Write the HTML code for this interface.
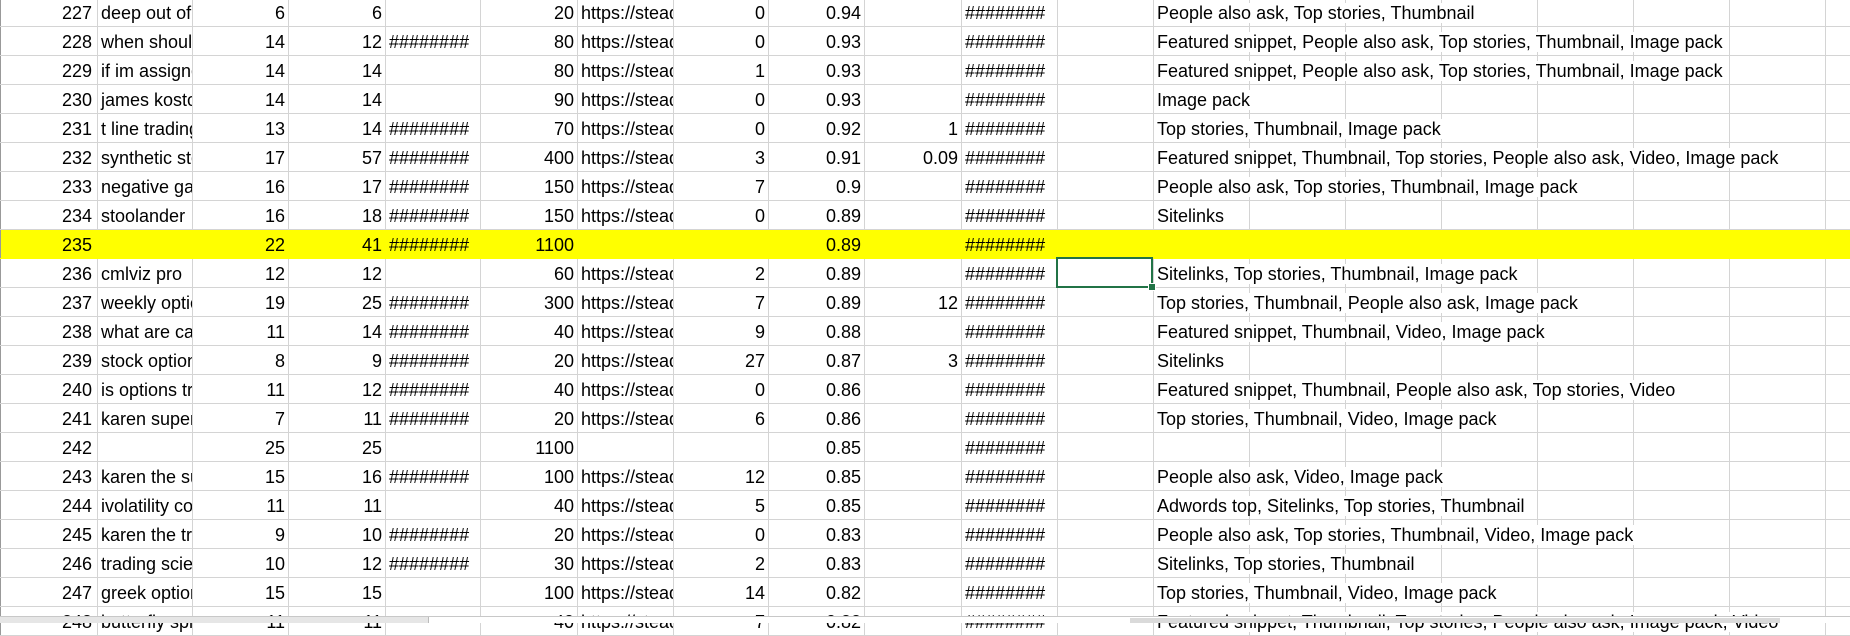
<!DOCTYPE html>
<html><head><meta charset="utf-8"><style>
html,body{margin:0;padding:0;width:1850px;height:622px;overflow:hidden;background:#fff;font-family:"Liberation Sans",sans-serif;}
table{position:absolute;left:0;top:-3px;width:1921px;border-collapse:collapse;table-layout:fixed;font-size:18px;color:#000;}
td{height:29px;border:1px solid #d4d4d4;padding:0 3px 3px 3px;white-space:nowrap;overflow:hidden;vertical-align:bottom;line-height:20px;box-sizing:border-box;}
td.r{text-align:right;}
td.h{text-align:right;padding-right:5px;border-left:1px solid #999;}
td.m{overflow:visible;position:relative;}
td.m span{position:relative;z-index:2;background:#fff;padding-right:2px;}
tr.y td{background:#ffff00;border-color:#ffff00;}
tr.y td.h{border-left-color:#999;}
tr{height:29px;}
.sel{position:absolute;left:1056px;top:257px;width:97px;height:31px;border:2px solid #217346;box-sizing:border-box;z-index:3;}
.sel i{position:absolute;right:-5px;bottom:-5px;width:6px;height:6px;background:#217346;border:1px solid #fff;}
.sb{position:absolute;left:0;top:616px;width:1850px;height:6px;background:#fff;border-top:1px solid #c8c8c8;z-index:5;}
.sb .a{position:absolute;left:0;top:0;width:428px;height:6px;background:#e6e6e6;border-right:1px solid #bbb;}
.sb .t{position:absolute;left:1130px;top:1px;width:650px;height:5px;background:#dadada;}
</style></head><body>
<table>
<colgroup><col style="width:97px"><col style="width:95px"><col style="width:96px"><col style="width:97px"><col style="width:95px"><col style="width:97px"><col style="width:96px"><col style="width:95px"><col style="width:96px"><col style="width:97px"><col style="width:96px"><col style="width:96px"><col style="width:96px"><col style="width:96px"><col style="width:96px"><col style="width:96px"><col style="width:96px"><col style="width:96px"><col style="width:96px"><col style="width:96px"></colgroup>
<tr><td class="h">227</td><td>deep out of</td><td class="r">6</td><td class="r">6</td><td></td><td class="r">20</td><td>https://steadyoptions</td><td class="r">0</td><td class="r">0.94</td><td></td><td>########</td><td></td><td class="m"><span>People also ask, Top stories, Thumbnail</span></td><td></td><td></td><td></td><td></td><td></td><td></td><td></td></tr>
<tr><td class="h">228</td><td>when should</td><td class="r">14</td><td class="r">12</td><td>########</td><td class="r">80</td><td>https://steadyoptions</td><td class="r">0</td><td class="r">0.93</td><td></td><td>########</td><td></td><td class="m"><span>Featured snippet, People also ask, Top stories, Thumbnail, Image pack</span></td><td></td><td></td><td></td><td></td><td></td><td></td><td></td></tr>
<tr><td class="h">229</td><td>if im assigned</td><td class="r">14</td><td class="r">14</td><td></td><td class="r">80</td><td>https://steadyoptions</td><td class="r">1</td><td class="r">0.93</td><td></td><td>########</td><td></td><td class="m"><span>Featured snippet, People also ask, Top stories, Thumbnail, Image pack</span></td><td></td><td></td><td></td><td></td><td></td><td></td><td></td></tr>
<tr><td class="h">230</td><td>james kostohryz</td><td class="r">14</td><td class="r">14</td><td></td><td class="r">90</td><td>https://steadyoptions</td><td class="r">0</td><td class="r">0.93</td><td></td><td>########</td><td></td><td class="m"><span>Image pack</span></td><td></td><td></td><td></td><td></td><td></td><td></td><td></td></tr>
<tr><td class="h">231</td><td>t line trading</td><td class="r">13</td><td class="r">14</td><td>########</td><td class="r">70</td><td>https://steadyoptions</td><td class="r">0</td><td class="r">0.92</td><td class="r">1</td><td>########</td><td></td><td class="m"><span>Top stories, Thumbnail, Image pack</span></td><td></td><td></td><td></td><td></td><td></td><td></td><td></td></tr>
<tr><td class="h">232</td><td>synthetic stock</td><td class="r">17</td><td class="r">57</td><td>########</td><td class="r">400</td><td>https://steadyoptions</td><td class="r">3</td><td class="r">0.91</td><td class="r">0.09</td><td>########</td><td></td><td class="m"><span>Featured snippet, Thumbnail, Top stories, People also ask, Video, Image pack</span></td><td></td><td></td><td></td><td></td><td></td><td></td><td></td></tr>
<tr><td class="h">233</td><td>negative gamma</td><td class="r">16</td><td class="r">17</td><td>########</td><td class="r">150</td><td>https://steadyoptions</td><td class="r">7</td><td class="r">0.9</td><td></td><td>########</td><td></td><td class="m"><span>People also ask, Top stories, Thumbnail, Image pack</span></td><td></td><td></td><td></td><td></td><td></td><td></td><td></td></tr>
<tr><td class="h">234</td><td>stoolander</td><td class="r">16</td><td class="r">18</td><td>########</td><td class="r">150</td><td>https://steadyoptions</td><td class="r">0</td><td class="r">0.89</td><td></td><td>########</td><td></td><td class="m"><span>Sitelinks</span></td><td></td><td></td><td></td><td></td><td></td><td></td><td></td></tr>
<tr class="y"><td class="h">235</td><td></td><td class="r">22</td><td class="r">41</td><td>########</td><td class="r">1100</td><td></td><td></td><td class="r">0.89</td><td></td><td>########</td><td></td><td></td><td></td><td></td><td></td><td></td><td></td><td></td><td></td></tr>
<tr><td class="h">236</td><td>cmlviz pro</td><td class="r">12</td><td class="r">12</td><td></td><td class="r">60</td><td>https://steadyoptions</td><td class="r">2</td><td class="r">0.89</td><td></td><td>########</td><td></td><td class="m"><span>Sitelinks, Top stories, Thumbnail, Image pack</span></td><td></td><td></td><td></td><td></td><td></td><td></td><td></td></tr>
<tr><td class="h">237</td><td>weekly options</td><td class="r">19</td><td class="r">25</td><td>########</td><td class="r">300</td><td>https://steadyoptions</td><td class="r">7</td><td class="r">0.89</td><td class="r">12</td><td>########</td><td></td><td class="m"><span>Top stories, Thumbnail, People also ask, Image pack</span></td><td></td><td></td><td></td><td></td><td></td><td></td><td></td></tr>
<tr><td class="h">238</td><td>what are calls</td><td class="r">11</td><td class="r">14</td><td>########</td><td class="r">40</td><td>https://steadyoptions</td><td class="r">9</td><td class="r">0.88</td><td></td><td>########</td><td></td><td class="m"><span>Featured snippet, Thumbnail, Video, Image pack</span></td><td></td><td></td><td></td><td></td><td></td><td></td><td></td></tr>
<tr><td class="h">239</td><td>stock options</td><td class="r">8</td><td class="r">9</td><td>########</td><td class="r">20</td><td>https://steadyoptions</td><td class="r">27</td><td class="r">0.87</td><td class="r">3</td><td>########</td><td></td><td class="m"><span>Sitelinks</span></td><td></td><td></td><td></td><td></td><td></td><td></td><td></td></tr>
<tr><td class="h">240</td><td>is options trading</td><td class="r">11</td><td class="r">12</td><td>########</td><td class="r">40</td><td>https://steadyoptions</td><td class="r">0</td><td class="r">0.86</td><td></td><td>########</td><td></td><td class="m"><span>Featured snippet, Thumbnail, People also ask, Top stories, Video</span></td><td></td><td></td><td></td><td></td><td></td><td></td><td></td></tr>
<tr><td class="h">241</td><td>karen supertrader</td><td class="r">7</td><td class="r">11</td><td>########</td><td class="r">20</td><td>https://steadyoptions</td><td class="r">6</td><td class="r">0.86</td><td></td><td>########</td><td></td><td class="m"><span>Top stories, Thumbnail, Video, Image pack</span></td><td></td><td></td><td></td><td></td><td></td><td></td><td></td></tr>
<tr><td class="h">242</td><td></td><td class="r">25</td><td class="r">25</td><td></td><td class="r">1100</td><td></td><td></td><td class="r">0.85</td><td></td><td>########</td><td></td><td></td><td></td><td></td><td></td><td></td><td></td><td></td><td></td></tr>
<tr><td class="h">243</td><td>karen the supertrader</td><td class="r">15</td><td class="r">16</td><td>########</td><td class="r">100</td><td>https://steadyoptions</td><td class="r">12</td><td class="r">0.85</td><td></td><td>########</td><td></td><td class="m"><span>People also ask, Video, Image pack</span></td><td></td><td></td><td></td><td></td><td></td><td></td><td></td></tr>
<tr><td class="h">244</td><td>ivolatility com</td><td class="r">11</td><td class="r">11</td><td></td><td class="r">40</td><td>https://steadyoptions</td><td class="r">5</td><td class="r">0.85</td><td></td><td>########</td><td></td><td class="m"><span>Adwords top, Sitelinks, Top stories, Thumbnail</span></td><td></td><td></td><td></td><td></td><td></td><td></td><td></td></tr>
<tr><td class="h">245</td><td>karen the trader</td><td class="r">9</td><td class="r">10</td><td>########</td><td class="r">20</td><td>https://steadyoptions</td><td class="r">0</td><td class="r">0.83</td><td></td><td>########</td><td></td><td class="m"><span>People also ask, Top stories, Thumbnail, Video, Image pack</span></td><td></td><td></td><td></td><td></td><td></td><td></td><td></td></tr>
<tr><td class="h">246</td><td>trading science</td><td class="r">10</td><td class="r">12</td><td>########</td><td class="r">30</td><td>https://steadyoptions</td><td class="r">2</td><td class="r">0.83</td><td></td><td>########</td><td></td><td class="m"><span>Sitelinks, Top stories, Thumbnail</span></td><td></td><td></td><td></td><td></td><td></td><td></td><td></td></tr>
<tr><td class="h">247</td><td>greek options</td><td class="r">15</td><td class="r">15</td><td></td><td class="r">100</td><td>https://steadyoptions</td><td class="r">14</td><td class="r">0.82</td><td></td><td>########</td><td></td><td class="m"><span>Top stories, Thumbnail, Video, Image pack</span></td><td></td><td></td><td></td><td></td><td></td><td></td><td></td></tr>
<tr><td class="h">248</td><td>butterfly spread</td><td class="r">11</td><td class="r">11</td><td></td><td class="r">40</td><td>https://steadyoptions</td><td class="r">7</td><td class="r">0.82</td><td></td><td>########</td><td></td><td class="m"><span>Featured snippet, Thumbnail, Top stories, People also ask, Image pack, Video</span></td><td></td><td></td><td></td><td></td><td></td><td></td><td></td></tr>
</table>
<div class="sel"><i></i></div>
<div class="sb"><div class="a"></div><div class="t"></div></div>
</body></html>
